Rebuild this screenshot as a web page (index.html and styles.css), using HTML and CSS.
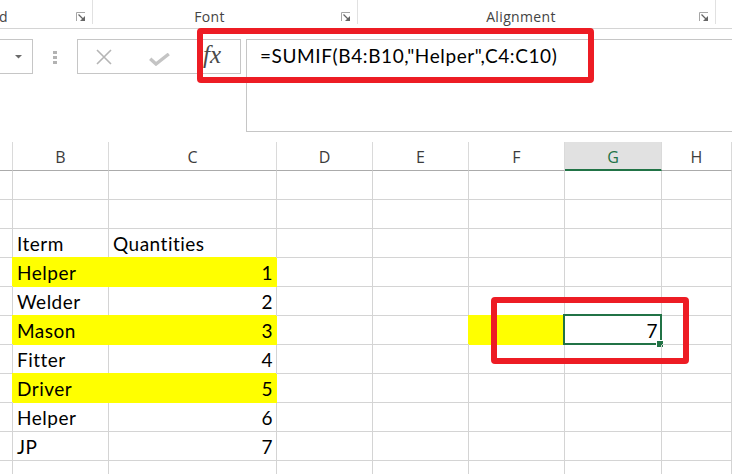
FILE: index.html
```html
<!DOCTYPE html>
<html>
<head>
<meta charset="utf-8">
<link rel="stylesheet" href="styles.css">
</head>
<body>
<div class="app">
  <div class="ribbon">
    <div class="grp g1"><span class="lbl cut">d</span><svg class="launch" viewBox="0 0 9 9" width="9" height="9"><path d="M0.5 9V0.5H9" fill="none" stroke="#a6a6a6" stroke-width="1"/><path d="M2.5 2.5L7 7" stroke="#666" stroke-width="1.2"/><path d="M9 4V9H4Z" fill="#666"/></svg></div>
    <div class="sep"></div>
    <div class="grp g2"><span class="lbl">Font</span><svg class="launch" viewBox="0 0 9 9" width="9" height="9"><path d="M0.5 9V0.5H9" fill="none" stroke="#a6a6a6" stroke-width="1"/><path d="M2.5 2.5L7 7" stroke="#666" stroke-width="1.2"/><path d="M9 4V9H4Z" fill="#666"/></svg></div>
    <div class="sep"></div>
    <div class="grp g3"><span class="lbl">Alignment</span><svg class="launch" viewBox="0 0 9 9" width="9" height="9"><path d="M0.5 9V0.5H9" fill="none" stroke="#a6a6a6" stroke-width="1"/><path d="M2.5 2.5L7 7" stroke="#666" stroke-width="1.2"/><path d="M9 4V9H4Z" fill="#666"/></svg></div>
    <div class="sep"></div>
    <div class="grp g4"></div>
  </div>

  <div class="fbar">
    <div class="namebox"><svg viewBox="0 0 7 4" width="7" height="4"><path d="M0 0H7L3.5 3.5Z" fill="#6a6a6a"/></svg></div>
    <div class="dots"><i></i><i></i><i></i></div>
    <div class="btns">
      <svg class="ic-x" viewBox="0 0 16 16" width="16" height="16"><path d="M1 1L15 15M15 1L1 15" stroke="#b5b5b5" stroke-width="1.6"/></svg>
      <svg class="ic-ok" viewBox="0 0 21 13" width="21" height="13"><path d="M1.2 5.8L7 11L19.8 1" fill="none" stroke="#c4c4c4" stroke-width="3.4"/></svg>
      <span class="fx">fx</span>
    </div>
    <div class="finput">=SUMIF(B4:B10,"Helper",C4:C10)</div>
  </div>

  <div class="sheet">
    <div class="ch"></div><div class="ch">B</div><div class="ch">C</div><div class="ch">D</div><div class="ch">E</div><div class="ch">F</div><div class="ch active">G</div><div class="ch">H</div>

    <div class="c"></div><div class="c"></div><div class="c"></div><div class="c"></div><div class="c"></div><div class="c"></div><div class="c"></div><div class="c"></div>
    <div class="c"></div><div class="c"></div><div class="c"></div><div class="c"></div><div class="c"></div><div class="c"></div><div class="c"></div><div class="c"></div>
    <div class="c"></div><div class="c">Iterm</div><div class="c">Quantities</div><div class="c"></div><div class="c"></div><div class="c"></div><div class="c"></div><div class="c"></div>
    <div class="c"></div><div class="c y">Helper</div><div class="c y num">1</div><div class="c"></div><div class="c"></div><div class="c"></div><div class="c"></div><div class="c"></div>
    <div class="c"></div><div class="c">Welder</div><div class="c num">2</div><div class="c"></div><div class="c"></div><div class="c"></div><div class="c"></div><div class="c"></div>
    <div class="c"></div><div class="c y">Mason</div><div class="c y num">3</div><div class="c"></div><div class="c"></div><div class="c y"></div><div class="c num sel-cell">7<span class="sel"></span><span class="handle"></span></div><div class="c"></div>
    <div class="c"></div><div class="c">Fitter</div><div class="c num">4</div><div class="c"></div><div class="c"></div><div class="c"></div><div class="c"></div><div class="c"></div>
    <div class="c"></div><div class="c y">Driver</div><div class="c y num">5</div><div class="c"></div><div class="c"></div><div class="c"></div><div class="c"></div><div class="c"></div>
    <div class="c"></div><div class="c">Helper</div><div class="c num">6</div><div class="c"></div><div class="c"></div><div class="c"></div><div class="c"></div><div class="c"></div>
    <div class="c"></div><div class="c">JP</div><div class="c num">7</div><div class="c"></div><div class="c"></div><div class="c"></div><div class="c"></div><div class="c"></div>
    <div class="c"></div><div class="c"></div><div class="c"></div><div class="c"></div><div class="c"></div><div class="c"></div><div class="c"></div><div class="c"></div>
  </div>

  <div class="mark m1"></div>
  <div class="mark m2"></div>
</div>
</body>
</html>
```

FILE: styles.css
```css
* { box-sizing: border-box; }
html, body { margin: 0; padding: 0; background: #fff; }
.app {
  position: relative;
  width: 732px;
  height: 474px;
  overflow: hidden;
  background: #fff;
  font-family: "Open Sans", "Noto Sans", sans-serif;
}

/* ribbon group labels */
.ribbon {
  display: flex;
  height: 29px;
  border-bottom: 1px solid #d4d4d4;
}
.grp {
  display: flex;
  align-items: flex-start;
  position: relative;
  padding-right: 7px;
}
.g1 { width: 92px; }
.g2 { width: 264px; }
.g3 { width: 357px; }
.g4 { flex: 1; }
.sep { width: 1px; height: 24px; background: #e1e1e1; flex: none; }
.lbl {
  flex: 1;
  text-align: center;
  font-size: 14px;
  letter-spacing: 0.35px;
  color: #444;
  line-height: 20px;
  padding-top: 7px;
  padding-right: 15px;
}
.lbl.cut { text-align: left; margin-left: -1px; padding-right: 0; }
.launch { margin-top: 12px; flex: none; }

/* formula bar */
.fbar {
  display: flex;
  align-items: flex-start;
  height: 103px;
  padding-top: 10px;
}
.namebox {
  margin-left: -1px;
  width: 34px;
  height: 35px;
  border: 1px solid #c6c6c6;
  display: flex;
  align-items: center;
  padding-left: 15px;
}
.dots {
  margin-left: 20px;
  margin-top: 12px;
  display: flex;
  flex-direction: column;
  gap: 2px;
}
.dots i { display: block; width: 4px; height: 3px; background: #b3b3b3; }
.btns {
  margin-left: 20px;
  width: 164px;
  height: 35px;
  border: 1px solid #c6c6c6;
  display: flex;
  align-items: center;
}
.ic-x { margin-left: 18px; margin-top: 1px; }
.ic-ok { margin-left: 37px; margin-top: 6px; }
.fx {
  margin-left: 33px;
  font-family: "Liberation Serif", serif;
  font-style: italic;
  font-size: 25px;
  color: #4a4a4a;
  line-height: 22px;
  margin-top: -3px;
}
.finput {
  flex: 1;
  margin-left: 5px;
  height: 93px;
  border-top: 1px solid #c6c6c6;
  border-left: 1px solid #c6c6c6;
  border-bottom: 1px solid #c6c6c6;
  padding: 6px 0 0 13px;
  font-family: "Lato", sans-serif;
  font-size: 19px;
  line-height: 19px;
  letter-spacing: 0.6px;
  color: #000;
  white-space: nowrap;
}

/* sheet grid */
.sheet {
  margin-top: 10px;
  display: grid;
  grid-template-columns: 13px 96px 168px 96px 96px 96px 97px 1fr;
  grid-auto-rows: 29px;
}
.ch {
  border-right: 1px solid #dadada;
  border-bottom: 1px solid #ababab;
  display: flex;
  align-items: center;
  justify-content: center;
  padding-top: 2px;
  font-size: 16px;
  color: #3c3c3c;
}
.ch.active {
  background: #e1e1e1;
  border-bottom: 2px solid #217346;
  color: #217346;
}
.c {
  position: relative;
  border-right: 1px solid #d4d4d4;
  border-bottom: 1px solid #d4d4d4;
  display: flex;
  align-items: flex-end;
  padding: 0 3px 4px 4px;
  font-family: "Lato", sans-serif;
  font-size: 19px;
  line-height: 19px;
  letter-spacing: 0.5px;
  color: #000;
  white-space: nowrap;
}
.c.num { justify-content: flex-end; padding-right: 3px; }
.c.y {
  background: #ffff00;
  border-right-color: #ffff00;
  border-bottom-color: #ffff00;
  box-shadow: -1px -1px 0 #ffff00;
}
.sel-cell { padding-right: 6px; }
.sel {
  position: absolute;
  left: -2px;
  top: -2px;
  width: 99px;
  height: 31px;
  border: 2px solid #217346;
}
.handle {
  position: absolute;
  left: 92px;
  top: 25px;
  width: 6px;
  height: 6px;
  background: #217346;
  box-shadow: 0 0 0 1px #fff;
}

/* red highlight marks */
.mark {
  position: absolute;
  border: 6px solid #ed1c24;
  border-radius: 4px;
}
.m1 { left: 197px; top: 28px; width: 397px; height: 55px; }
.m2 { left: 491px; top: 297px; width: 198px; height: 67px; }
```
